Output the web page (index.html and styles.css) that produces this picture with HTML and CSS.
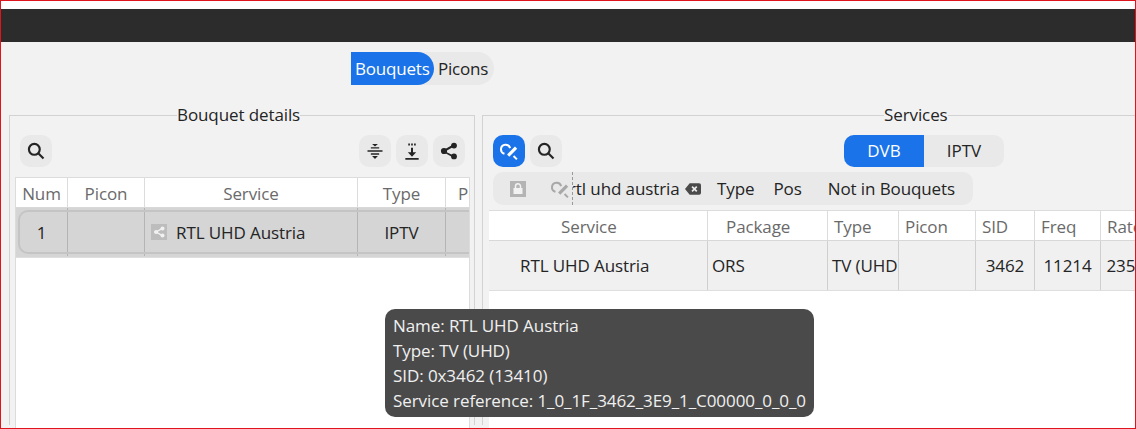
FILE: index.html
```html
<!DOCTYPE html>
<html lang="en">
<head>
<meta charset="utf-8">
<title>Bouquets</title>
<link rel="stylesheet" href="styles.css">
</head>
<body>
<div class="window">
  <div class="titlebar"></div>
  <div class="tabs-row">
    <div class="tabs">
      <span class="tab tab-on">Bouquets</span>
      <span class="tab">Picons</span>
    </div>
  </div>
  <div class="panels">
    <fieldset class="panel panel-left">
      <legend>Bouquet details</legend>
      <div class="toolbar">
        <button class="icon-btn"><svg class="ico" viewBox="0 0 24 24"><circle cx="10" cy="10" r="6.500"/><path d="M15 15l6 6"/></svg></button>
        <div class="spacer"></div>
        <button class="icon-btn"><svg class="ico ico-fill" viewBox="0 0 24 24"><path d="M3 11h18v1.800H3zM7 7.500h10v1.600H7zM8.500 3.500l3.500 3 3.500-3zM7 14.800h10v1.600H7zM8.500 18l3.500 3.500 3.500-3.500z"/></svg></button>
        <button class="icon-btn"><svg class="ico ico-fill" viewBox="0 0 24 24"><path d="M4 20.500h16v2H4zM10.800 8h2.400v5.500H17L12 18.800 7 13.500h3.800zM7.500 3h2v2.500h-2zM11 3h2v2.500h-2zM14.500 3h2v2.500h-2z"/></svg></button>
        <button class="icon-btn"><svg class="ico ico-fill" viewBox="0 0 24 24"><circle cx="18" cy="5.500" r="3.500"/><circle cx="18" cy="18.500" r="3.500"/><circle cx="6" cy="12" r="3.700"/><path d="M6 10.500L17 4.300l1 2.200L7.500 12.500l10.500 5.200-1 2.100L5.500 13.500z"/></svg></button>
      </div>
      <div class="grid grid-left">
        <div class="row head">
          <div class="cell">Num</div><div class="cell">Picon</div><div class="cell">Service</div><div class="cell">Type</div><div class="cell cell-clip">Pos</div>
        </div>
        <div class="row body-row selected">
          <div class="cell">1</div><div class="cell"></div>
          <div class="cell cell-start"><svg class="share-badge" viewBox="0 0 16 16"><rect width="16" height="16" fill="#bdbdbd"/><g fill="#f2f2f2"><circle cx="11.500" cy="4.500" r="2"/><circle cx="11.500" cy="11.500" r="2"/><circle cx="5" cy="8" r="2"/><path d="M5 7.200l6-3.400.6 1.200L6.500 8l5.100 3-.6 1.200-6-3.400z"/></g></svg>RTL UHD Austria</div>
          <div class="cell">IPTV</div><div class="cell"></div>
        </div>
      </div>
    </fieldset>
    <fieldset class="panel panel-right">
      <legend>Services</legend>
      <div class="toolbar toolbar-right">
        <button class="icon-btn icon-btn-on"><svg class="ico ico-edit" viewBox="0 0 24 24"><path d="M13.400 8.550A5.600 5.600 0 1 0 6.550 15.400"/><path class="pencil" d="M11 17.500L20.500 8"/><path d="M17.500 18l4 4"/></svg></button>
        <button class="icon-btn"><svg class="ico" viewBox="0 0 24 24"><circle cx="10" cy="10" r="6.500"/><path d="M15 15l6 6"/></svg></button>
        <div class="segment">
          <span class="seg seg-on">DVB</span><span class="seg">IPTV</span>
        </div>
      </div>
      <div class="filterbar">
        <span class="filter-icons">
          <svg class="lock" viewBox="0 0 16 16"><rect width="16" height="16" fill="#b4b4b4"/><path d="M3.500 7h9v6h-9z" fill="#f2f2f2"/><path d="M5.500 7V5.300a2.500 2.500 0 0 1 5 0V7" fill="none" stroke="#f2f2f2" stroke-width="1.500"/></svg>
          <svg class="ico ico-edit ico-grey" viewBox="0 0 24 24"><path d="M13.400 8.550A5.600 5.600 0 1 0 6.550 15.400"/><path class="pencil" d="M11 17.500L20.500 8"/><path d="M17.500 18l4 4"/></svg>
        </span>
        <span class="filter-input"><span class="filter-text">rtl uhd austria</span></span>
        <svg class="clear" viewBox="0 0 17 12"><path d="M5 0h10a2 2 0 0 1 2 2v8a2 2 0 0 1-2 2H5L0 6z" fill="#4a4a4a"/><path d="M7.500 3.500l5 5M12.500 3.500l-5 5" stroke="#ececec" stroke-width="1.800"/></svg>
        <span class="filter-label">Type</span>
        <span class="filter-label">Pos</span>
        <span class="filter-label filter-last">Not in Bouquets</span>
      </div>
      <div class="grid grid-right">
        <div class="row head">
          <div class="cell cell-h-service">Service</div><div class="cell cell-h-package">Package</div><div class="cell cell-h">Type</div><div class="cell cell-h">Picon</div><div class="cell cell-h">SID</div><div class="cell cell-h">Freq</div><div class="cell cell-h">Rate</div>
        </div>
        <div class="row body-row">
          <div class="cell cell-name">RTL UHD Austria</div><div class="cell cell-start">ORS</div><div class="cell cell-start cell-tv">TV (UHD)</div><div class="cell"></div><div class="cell">3462</div><div class="cell">11214</div><div class="cell">23500</div>
        </div>
      </div>
    </fieldset>
  </div>
  <div class="tooltip">
    <div>Name: RTL UHD Austria</div>
    <div>Type: TV (UHD)</div>
    <div>SID: 0x3462 (13410)</div>
    <div>Service reference: 1_0_1F_3462_3E9_1_C00000_0_0_0</div>
  </div>
</div>
</body>
</html>
```
FILE: styles.css
```css
* { box-sizing: border-box; }
html, body { margin: 0; height: 100%; overflow: hidden; }
body { font-family: "Open Sans", "Noto Sans", sans-serif; font-size: 17px; color: #242424; background: #fff; }
.window { position: relative; width: 1136px; height: 429px; border: 1px solid #e0141c; overflow: hidden; background: #f2f2f2; display: flex; flex-direction: column; }
.titlebar { height: 33px; margin-top: 8px; background: #2c2c2c; flex: none; box-shadow: 0 -8px 0 #fff; }
.tabs-row { height: 61px; padding: 10px 0 0 350px; flex: none; }
.tabs { display: inline-flex; height: 33px; width: 143px; background: #e9e9e9; border-radius: 0 17px 17px 0; }
.tab { line-height: 33px; padding: 0 4px; letter-spacing: -0.2px; white-space: nowrap; }
.tab-on { width: 83px; background: #1a73e8; color: #fff; border-radius: 0 17px 17px 0; }
.panels { display: flex; gap: 7px; padding-left: 8px; flex: 1; min-height: 0; }
.panel { margin: 0; padding: 0 5px; border: 1px solid #d2d2d2; border-bottom: 0; min-width: 0; height: 322px; flex: none; }
.panel-left { width: 466px; }
.panel-right { width: 900px; }
.panel legend { padding: 0; line-height: 24px; }
.panel-left legend { margin-left: 162px; letter-spacing: -0.1px; }
.panel-right legend { margin-left: 396px; letter-spacing: -0.1px; }
.toolbar { display: flex; gap: 5px; height: 32px; margin-top: 8px; padding: 0 4px 0 5px; align-items: center; }
.spacer { flex: 1; }
.icon-btn { width: 32px; height: 32px; padding: 0; border: 0; border-radius: 10px; background: #e9e9e9; display: flex; align-items: center; justify-content: center; flex: none; color: #242424; }
.icon-btn-on { background: #1a73e8; color: #fff; }
.ico { width: 20px; height: 20px; fill: none; stroke: currentColor; stroke-width: 2.6; flex: none; }
.ico-fill { fill: currentColor; stroke: none; }
.ico-edit { stroke-width: 2.4; }
.pencil { stroke-width: 3.800; }
.ico-grey { color: #a8a8a8; }
.toolbar-right { padding-left: 5px; }
.segment { display: flex; margin-left: 277px; height: 32px; width: 160px; border-radius: 10px; background: #e9e9e9; overflow: hidden; }
.seg { width: 80px; line-height: 32px; text-align: center; }
.seg-on { background: #1a73e8; color: #fff; }
.filterbar { display: flex; align-items: center; width: 480px; height: 33px; margin: 5px 0 0 5px; background: #e9e9e9; border-radius: 10px; white-space: nowrap; }
.filter-icons { width: 80px; height: 33px; padding-left: 17px; display: flex; align-items: center; gap: 24px; flex: none; border-right: 1px dashed #9a9a9a; }
.lock { width: 16px; height: 16px; flex: none; }
.filter-input { width: 112px; overflow: hidden; flex: none; }
.filter-text { display: block; margin-left: -4px; letter-spacing: -0.1px; }
.clear { width: 16px; height: 12px; flex: none; }
.filter-label { margin-left: 16px; letter-spacing: -0.1px; }
.filter-label + .filter-label { margin-left: 19px; }
.filter-label.filter-last { margin-left: 26px; }
.grid { background: #fff; height: 270px; }
.grid-left { margin-top: 10px; width: 455px; height: 260px; border: 1px solid #dcdcdc; border-bottom: 0; overflow: hidden; }
.grid-right { margin: 5px 0 0 1px; width: 650px; border-top: 1px solid #dcdcdc; overflow: hidden; }
.row { display: grid; }
.grid-left .row { grid-template-columns: 52px 77px 213px 88px 60px; }
.grid-right .row { grid-template-columns: 219px 120px 71px 77px 59px 66px 60px; }
.head { height: 30px; color: #6a6a6a; background: #fff; }
.head .cell { padding-top: 1px; }
.body-row { height: 50px; background: #f0f0f0; }
.grid-left .selected { height: 50px; background: #d5d5d5; position: relative; padding-bottom: 1px; }
.selected::after { content: ""; position: absolute; inset: 2px 0 3px 2px; border: 2px solid #c4c4c4; border-right: 0; border-radius: 10px 0 0 10px; pointer-events: none; }
.cell { display: flex; align-items: center; justify-content: center; white-space: nowrap; overflow: hidden; border-right: 1px solid #dcdcdc; letter-spacing: -0.1px; }
.selected .cell { border-right-color: #b8b8b8; }
.body-row .cell { border-right-color: #cfcfcf; }
.grid-left .body-row .cell { border-right-color: #b4b4b4; }
.head .cell { border-bottom: 1px solid #d8d8d8; }
.body-row { border-bottom: 1px solid #dedede; }
.cell-clip { justify-content: flex-start; padding-left: 12px; }
.cell-start { justify-content: flex-start; padding-left: 4px; }
.cell-name { justify-content: flex-start; padding-left: 31px; }
.cell-tv { padding-left: 4px; }
.head .cell-h { justify-content: flex-start; padding-left: 6px; }
.head .cell-h-service { justify-content: flex-start; padding-left: 72px; }
.head .cell-h-package { justify-content: flex-start; padding-left: 18px; }
.share-badge { width: 16px; height: 16px; margin-right: 9px; flex: none; }
.grid-left .cell-start { padding-left: 6px; }
.tooltip { position: absolute; left: 384px; top: 308px; width: 429px; height: 108px; padding: 4px 8px; border-radius: 10px; background: #4a4a4a; color: #f0f0f0; line-height: 25px; white-space: nowrap; letter-spacing: -0.08px; }
```
